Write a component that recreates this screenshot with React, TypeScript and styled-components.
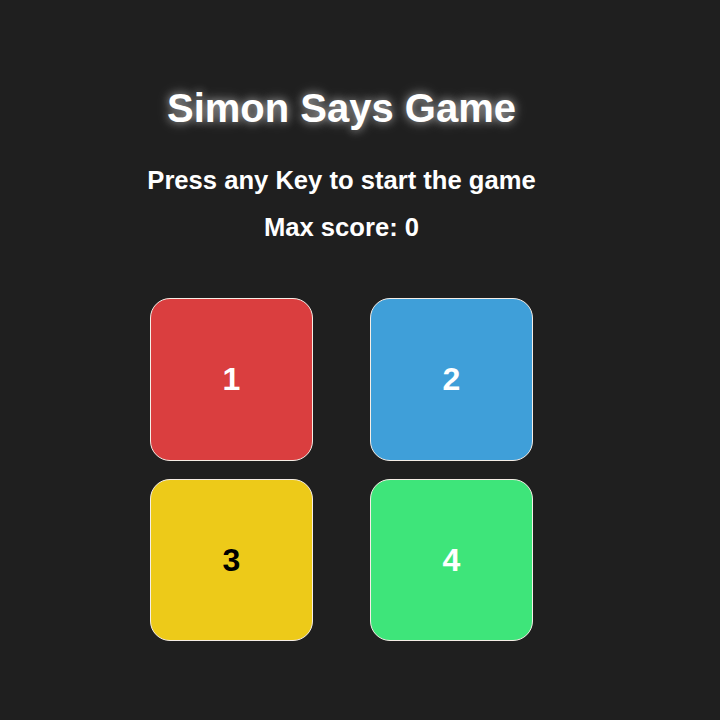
import React from 'react';
import styled, { createGlobalStyle } from 'styled-components';

const GlobalStyle = createGlobalStyle`
  body {
    margin: 0;
    background-color: #1f1f1f;
    font-family: "Liberation Sans", Arial, sans-serif;
  }
`;

type Tile = {
  id: number;
  color: string;
  text: string;
};

const tiles: Tile[] = [
  { id: 1, color: '#da3e3f', text: '#ffffff' },
  { id: 2, color: '#3f9fd9', text: '#ffffff' },
  { id: 3, color: '#edca19', text: '#000000' },
  { id: 4, color: '#3ee57a', text: '#ffffff' },
];

const App: React.FC = () => {
  return (
    <>
      <GlobalStyle />
      <Page>
        <Title>Simon Says Game</Title>
        <Status>Press any Key to start the game</Status>
        <Score>Max score: 0</Score>
        <Board>
          {tiles.map((tile) => (
            <Button key={tile.id} $bg={tile.color} $fg={tile.text}>
              {tile.id}
            </Button>
          ))}
        </Board>
      </Page>
    </>
  );
};

export default App;

const Page = styled.div`
  width: 683px;
  display: flex;
  flex-direction: column;
  align-items: center;
  padding-top: 85px;
  padding-bottom: 40px;
`;

const Title = styled.h1`
  margin: 0;
  font-size: 40px;
  line-height: 46px;
  font-weight: 700;
  color: #ffffff;
  text-shadow: 0 0 8px rgba(255, 255, 255, 0.55), 0 0 16px rgba(255, 255, 255, 0.25);
`;

const Status = styled.h2`
  margin: 34px 0 0;
  font-size: 25.6px;
  line-height: 30px;
  font-weight: 700;
  color: #ffffff;
`;

const Score = styled.h3`
  margin: 17px 0 0;
  font-size: 25.6px;
  line-height: 30px;
  font-weight: 700;
  color: #ffffff;
`;

const Board = styled.div`
  margin-top: 56px;
  display: grid;
  grid-template-columns: 163px 163px;
  grid-template-rows: 163px 162px;
  column-gap: 57px;
  row-gap: 18px;
`;

const Button = styled.div<{ $bg: string; $fg: string }>`
  box-sizing: border-box;
  display: flex;
  align-items: center;
  justify-content: center;
  background-color: ${(p) => p.$bg};
  color: ${(p) => p.$fg};
  border: 1px solid #f5ede6;
  border-radius: 20px;
  font-size: 32px;
  font-weight: 700;
`;
